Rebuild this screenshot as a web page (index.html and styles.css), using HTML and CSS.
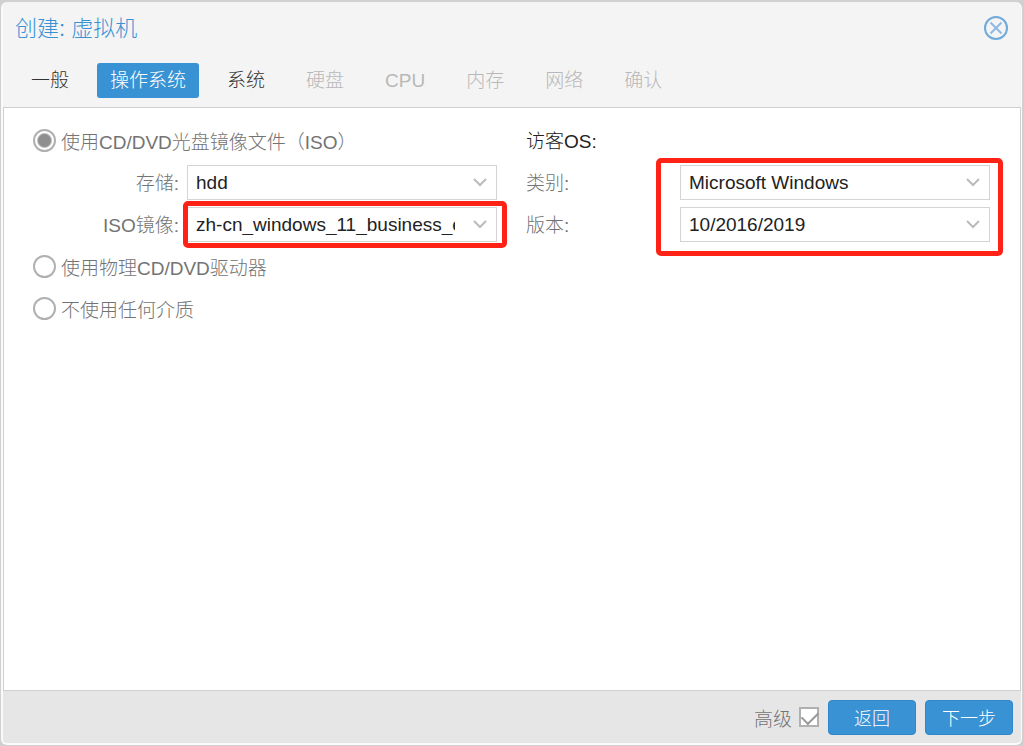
FILE: index.html
```html
<!DOCTYPE html>
<html lang="zh-CN">
<head>
  <meta charset="UTF-8">
  <meta name="viewport" content="width=device-width, initial-scale=1.0">
  <title>创建: 虚拟机</title>
  <link rel="stylesheet" href="styles.css">
</head>
<body>
  <div class="window">
    <div class="window-header">
      <h1>创建: 虚拟机</h1>
      <button type="button" class="close" aria-label="关闭">
        <svg width="26" height="26" viewBox="0 0 26 26" fill="none">
          <circle cx="13" cy="13" r="11" stroke="#6fa9da" stroke-width="2"/>
          <path d="M7.5 7.5l11 11M18.5 7.5l-11 11" stroke="#8fb8e6" stroke-width="2"/>
        </svg>
      </button>
    </div>

    <div class="tabs">
      <button type="button" class="tab">一般</button>
      <button type="button" class="tab active">操作系统</button>
      <button type="button" class="tab">系统</button>
      <button type="button" class="tab" disabled>硬盘</button>
      <button type="button" class="tab" disabled>CPU</button>
      <button type="button" class="tab" disabled>内存</button>
      <button type="button" class="tab" disabled>网络</button>
      <button type="button" class="tab" disabled>确认</button>
    </div>

    <form id="osForm" class="content">
      <div class="column">
        <label class="row choice">
          <input type="radio" name="media" value="iso" checked>
          使用CD/DVD光盘镜像文件（ISO）
        </label>
        <div class="row">
          <label class="field-label" for="storage">存储:</label>
          <div class="field">
            <select id="storage"><option>hdd</option></select>
            <svg class="arrow" viewBox="0 0 14 9"><path d="M1 1l6 6 6-6"/></svg>
          </div>
        </div>
        <div class="row">
          <label class="field-label" for="iso">ISO镜像:</label>
          <div class="field">
            <select id="iso"><option>zh-cn_windows_11_business_editions.iso</option></select>
            <svg class="arrow" viewBox="0 0 14 9"><path d="M1 1l6 6 6-6"/></svg>
            <span class="mark mark-iso"></span>
          </div>
        </div>
        <label class="row choice">
          <input type="radio" name="media" value="cdrom">
          使用物理CD/DVD驱动器
        </label>
        <label class="row choice">
          <input type="radio" name="media" value="none">
          不使用任何介质
        </label>
      </div>

      <div class="column">
        <div class="row group-title">访客OS:</div>
        <div class="guest">
          <div class="guest-labels">
            <label class="row" for="ostype">类别:</label>
            <label class="row" for="osversion">版本:</label>
          </div>
          <div class="guest-fields">
            <div class="field">
              <select id="ostype"><option>Microsoft Windows</option></select>
              <svg class="arrow" viewBox="0 0 14 9"><path d="M1 1l6 6 6-6"/></svg>
            </div>
            <div class="field">
              <select id="osversion"><option>10/2016/2019</option></select>
              <svg class="arrow" viewBox="0 0 14 9"><path d="M1 1l6 6 6-6"/></svg>
            </div>
            <span class="mark mark-guest"></span>
          </div>
        </div>
      </div>
    </form>

    <div class="window-footer">
      <label class="advanced">高级 <input type="checkbox" checked></label>
      <button type="button" class="btn">返回</button>
      <button type="submit" form="osForm" class="btn">下一步</button>
    </div>
  </div>
</body>
</html>
```

FILE: styles.css
```css
* {
  box-sizing: border-box;
}

body {
  margin: 0;
  padding: 2px 2px 1px 1px;
  height: 100vh;
  background-color: #d0d0d0;
  color: #737373;
  font-family: "Liberation Sans", "Noto Sans CJK SC", sans-serif;
  font-size: 19px;
  font-weight: 300;
}

button,
select {
  font: inherit;
}

.window {
  display: flex;
  flex-direction: column;
  height: 100%;
  border: 1px solid #fafafa;
  border-width: 0 1px 2px 2px;
  border-radius: 6px;
  background-color: #f4f4f4;
  overflow: hidden;
}

.window-header {
  display: flex;
  justify-content: space-between;
  align-items: center;
  height: 52px;
  padding: 0 12px;
}

.window-header h1 {
  margin: 0;
  padding-bottom: 5px;
  color: #3892d4;
  font-size: 22px;
  font-weight: 300;
}

.close {
  display: flex;
  padding: 0;
  border: none;
  background: none;
  cursor: pointer;
}

.tabs {
  display: flex;
  gap: 15px;
  padding: 9px 15px;
}

.tab {
  height: 35px;
  padding: 0 13px;
  border: none;
  border-radius: 3px;
  background: none;
  color: #333;
  line-height: 36px;
  cursor: pointer;
}

.tab.active {
  background-color: #3892d4;
  color: #fff;
}

.tab:disabled {
  color: #b8b8b8;
  cursor: default;
}

.content {
  display: grid;
  grid-template-columns: 1fr 1fr;
  gap: 29px;
  flex: 1;
  padding: 15px 30px 15px 29px;
  border: 1px solid #cfcfcf;
  background-color: #fff;
}

.column,
.guest-labels,
.guest-fields {
  display: flex;
  flex-direction: column;
  gap: 7px;
}

.row {
  display: flex;
  align-items: center;
  height: 35px;
}

.choice {
  gap: 5px;
}

input[type="radio"] {
  appearance: none;
  width: 23px;
  height: 23px;
  margin: 0;
  border: 2px solid #b0b0b0;
  border-radius: 50%;
  background-color: #fff;
}

input[type="radio"]:checked {
  background-image: radial-gradient(circle, #8f8f8f 6px, #fff 8px);
}

.field-label {
  flex: 1;
  padding: 0 8px 2px 0;
  text-align: right;
}

.field {
  position: relative;
  width: 310px;
}

.field select {
  display: block;
  appearance: none;
  width: 100%;
  height: 35px;
  padding: 0 41px 0 8px;
  border: 1px solid #d4d4d4;
  border-radius: 0;
  background-color: #fff;
  color: #222;
  font-weight: 400;
}

.arrow {
  position: absolute;
  top: 13px;
  right: 10px;
  width: 14px;
  height: 9px;
  fill: none;
  stroke: #bbb;
  stroke-width: 2;
  pointer-events: none;
}

.group-title,
.guest-labels .row {
  padding-bottom: 2px;
}

.group-title {
  color: #222;
}

.guest {
  display: flex;
  justify-content: space-between;
}

.guest-fields {
  position: relative;
}

/* red frames around the values to pick */
.mark {
  position: absolute;
  border: 5px solid #ff2216;
  border-radius: 5px;
  pointer-events: none;
}

.mark-iso {
  inset: -6px -10px -6px -4px;
}

.mark-guest {
  inset: -7px -13px -14px -24px;
}

.window-footer {
  display: flex;
  justify-content: flex-end;
  align-items: center;
  gap: 9px;
  height: 52px;
  padding: 0 8px;
  background-color: #e6e6e6;
}

.advanced {
  display: flex;
  align-items: center;
  gap: 7px;
}

.advanced input {
  appearance: none;
  width: 20px;
  height: 20px;
  margin: 0;
  border: 2px solid #b0b0b0;
  background-color: #fff;
}

.advanced input:checked::before {
  content: "";
  display: block;
  width: 14px;
  height: 8px;
  margin: 2px 1px;
  border: solid #999;
  border-width: 0 0 2px 2px;
  transform: rotate(-45deg);
}

.btn {
  width: 88px;
  height: 35px;
  padding: 0;
  border: 1px solid #2f86c9;
  border-radius: 4px;
  background-color: #3892d4;
  color: #fff;
  font-size: 18px;
  cursor: pointer;
}
```
